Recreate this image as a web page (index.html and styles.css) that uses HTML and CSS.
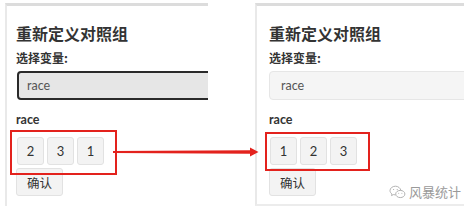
FILE: index.html
```html
<!DOCTYPE html>
<html lang="zh">
<head>
<meta charset="utf-8">
<title>重新定义对照组</title>
<link rel="stylesheet" href="styles.css">
</head>
<body>
<div class="page">
  <section class="panel panel-left">
    <h2 class="title">重新定义对照组</h2>
    <div class="label">选择变量:</div>
    <div class="select select-focus">race</div>
    <div class="label label-race">race</div>
    <div class="group">
      <button class="btn num">2</button>
      <button class="btn num">3</button>
      <button class="btn num">1</button>
    </div>
    <button class="btn ok">确认</button>
  </section>
  <section class="panel panel-right">
    <h2 class="title">重新定义对照组</h2>
    <div class="label">选择变量:</div>
    <div class="select">race</div>
    <div class="label label-race">race</div>
    <div class="group">
      <button class="btn num">1</button>
      <button class="btn num">2</button>
      <button class="btn num">3</button>
    </div>
    <button class="btn ok">确认</button>
    <div class="watermark">
      <svg class="wm-icon" width="17" height="14" viewBox="0 0 17 14">
        <path d="M6.5 1.2C3.4 1.2 1 3.2 1 5.6c0 1.4.8 2.6 2 3.4l-.5 1.6 1.9-1c.6.2 1.3.3 2.1.3" fill="none" stroke="#aaa" stroke-width="0.9"/>
        <path d="M12 5.6C11.4 3.1 9.2 1.2 6.5 1.2" fill="none" stroke="#aaa" stroke-width="0.9"/>
        <ellipse cx="11.3" cy="9" rx="4.6" ry="3.6" fill="none" stroke="#aaa" stroke-width="0.9"/>
        <circle cx="4.6" cy="4.5" r="0.6" fill="#aaa"/>
        <circle cx="8.2" cy="4.5" r="0.6" fill="#aaa"/>
        <circle cx="9.7" cy="8.3" r="0.5" fill="#aaa"/>
        <circle cx="12.9" cy="8.3" r="0.5" fill="#aaa"/>
      </svg>
      <span>风暴统计</span>
    </div>
  </section>
  <svg class="arrow" width="474" height="218" viewBox="0 0 474 218">
    <polygon points="113,150.9 250,150.2 250,147.6 258.5,152 250,156.4 250,153.8 113,153.1" fill="#e3221d"/>
  </svg>
</div>
</body>
</html>
```

FILE: styles.css
```css
* { box-sizing: border-box; }
html, body { margin: 0; padding: 0; background: #fff; }
body {
  width: 474px;
  height: 218px;
  overflow: hidden;
  font-family: "Lato", "Noto Sans CJK SC", sans-serif;
  color: #333;
}
.page {
  position: relative;
  display: flex;
  gap: 47px;
  padding: 3px 0 0 5px;
  height: 218px;
}
.panel {
  position: relative;
  overflow: hidden;
  height: 203px;
  border-top: 3px solid #dcdcdc;
  border-left: 2px solid #e9e9e9;
  padding-top: 16px;
  background: #fff;
}
.panel-left { width: 203px; padding-left: 9px; }
.panel-right {
  width: 209px;
  padding-left: 12px;
  border-bottom: 2px solid #ececec;
}
.title {
  margin: 0;
  font-family: "Noto Sans CJK SC", sans-serif;
  font-size: 16px;
  font-weight: 700;
  line-height: 22px;
  color: #333;
}
.label {
  margin-top: 5px;
  font-family: "Noto Sans CJK SC", sans-serif;
  font-size: 12px;
  font-weight: 700;
  line-height: 18px;
  color: #333;
}
.label-race {
  margin-top: 11px;
  font-family: "Lato", sans-serif;
  font-size: 12.5px;
}
.select {
  margin-top: 4px;
  width: 260px;
  height: 29px;
  padding-left: 10px;
  display: flex;
  align-items: center;
  font-size: 12.5px;
  color: #555;
  background: #f5f5f5;
  border: 1px solid #e6e6e6;
  border-radius: 4px;
}
.panel-right .select { padding-left: 11px; }
.select-focus {
  margin-left: 1px;
  background: #e6e6e6;
  border: 2px solid #2a2a2a;
  padding-left: 8px;
}
.group {
  position: relative;
  display: flex;
  gap: 3px;
  margin-top: 8px;
  margin-left: 1px;
}
.group::after {
  content: "";
  position: absolute;
  left: -7px;
  top: -7px;
  width: 103px;
  height: 41px;
  border: 2px solid #e3221d;
}
.panel-right .group::after {
  left: -5px;
  top: -5px;
  width: 101px;
  height: 35px;
}
.btn {
  font-family: "Lato", "Noto Sans CJK SC", sans-serif;
  font-size: 13px;
  color: #333;
  background: #f3f3f3;
  border: 1px solid #e2e2e2;
  border-radius: 3px;
  height: 28px;
  padding: 0;
  display: flex;
  align-items: center;
  justify-content: center;
}
.num { width: 27px; }
.ok {
  margin-top: 3px;
  margin-left: 0;
  width: 47px;
  font-family: "Noto Sans CJK SC", sans-serif;
  font-size: 12.5px;
}
.watermark {
  position: absolute;
  left: 132px;
  top: 178px;
  display: flex;
  align-items: center;
  gap: 3px;
  font-family: "Noto Sans CJK SC", sans-serif;
  font-size: 13px;
  line-height: 16px;
  color: #9a9a9a;
}
.arrow {
  position: absolute;
  left: 0;
  top: 0;
  pointer-events: none;
}
```
